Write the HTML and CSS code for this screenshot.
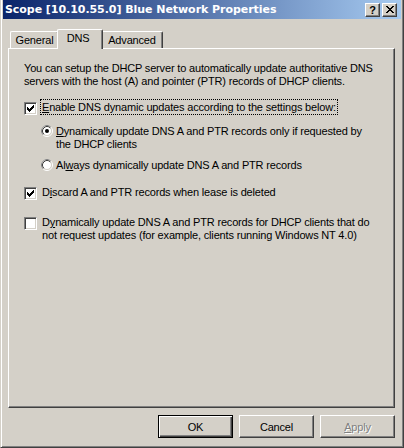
FILE: index.html
```html
<!DOCTYPE html>
<html>
<head>
<meta charset="utf-8">
<link rel="stylesheet" href="styles.css">
</head>
<body>
<div class="window">
  <div class="titlebar">
    <span class="title">Scope [10.10.55.0] Blue Network Properties</span>
    <span class="capbtn help">?</span>
    <span class="capbtn close"><svg width="8" height="7" viewBox="0 0 8 7" shape-rendering="crispEdges"><g fill="#000"><rect x="0" y="0" width="2" height="1"/><rect x="6" y="0" width="2" height="1"/><rect x="1" y="1" width="2" height="1"/><rect x="5" y="1" width="2" height="1"/><rect x="2" y="2" width="4" height="1"/><rect x="3" y="3" width="2" height="1"/><rect x="2" y="4" width="4" height="1"/><rect x="1" y="5" width="2" height="1"/><rect x="5" y="5" width="2" height="1"/><rect x="0" y="6" width="2" height="1"/><rect x="6" y="6" width="2" height="1"/></g></svg></span>
  </div>
  <div class="body">
    <div class="tabs">
      <div class="tab tab-general">General</div>
      <div class="tab tab-dns selected">DNS</div>
      <div class="tab tab-adv">Advanced</div>
    </div>
    <div class="panel">
      <p class="intro">You can setup the DHCP server to automatically update authoritative DNS<br>servers with the host (A) and pointer (PTR) records of DHCP clients.</p>

      <div class="row row-focus r-cb1">
        <span class="check checked"><svg width="11" height="11" viewBox="0 0 11 11" shape-rendering="crispEdges"><g fill="#000" transform="translate(2 2)"><rect x="6" y="0" width="1" height="1"/><rect x="5" y="1" width="2" height="1"/><rect x="0" y="2" width="1" height="1"/><rect x="4" y="2" width="3" height="1"/><rect x="0" y="3" width="2" height="1"/><rect x="3" y="3" width="3" height="1"/><rect x="0" y="4" width="5" height="1"/><rect x="1" y="5" width="3" height="1"/><rect x="2" y="6" width="1" height="1"/></g></svg></span>
        <span class="label focus"><u>E</u>nable DNS dynamic updates according to the settings below:</span>
      </div>

      <div class="row radio-row r-rad1">
        <span class="radio"><svg width="12" height="12" viewBox="0 0 12 12"><circle cx="6" cy="6" r="5.5" fill="none" stroke="#fff"/><path d="M2.11 9.89 A5.5 5.5 0 0 1 9.89 2.11" fill="none" stroke="#808080"/><circle cx="6" cy="6" r="4.5" fill="#fff" stroke="#d4d0c8"/><path d="M2.82 9.18 A4.5 4.5 0 0 1 9.18 2.82" fill="none" stroke="#404040"/><circle cx="6" cy="6" r="2" fill="#000"/></svg></span>
        <span class="label"><u>D</u>ynamically update DNS A and PTR records only if requested by<br>the DHCP clients</span>
      </div>

      <div class="row radio-row r-rad2">
        <span class="radio"><svg width="12" height="12" viewBox="0 0 12 12"><circle cx="6" cy="6" r="5.5" fill="none" stroke="#fff"/><path d="M2.11 9.89 A5.5 5.5 0 0 1 9.89 2.11" fill="none" stroke="#808080"/><circle cx="6" cy="6" r="4.5" fill="#fff" stroke="#d4d0c8"/><path d="M2.82 9.18 A4.5 4.5 0 0 1 9.18 2.82" fill="none" stroke="#404040"/></svg></span>
        <span class="label">Al<u>w</u>ays dynamically update DNS A and PTR records</span>
      </div>

      <div class="row r-cb2">
        <span class="check checked"><svg width="11" height="11" viewBox="0 0 11 11" shape-rendering="crispEdges"><g fill="#000" transform="translate(2 2)"><rect x="6" y="0" width="1" height="1"/><rect x="5" y="1" width="2" height="1"/><rect x="0" y="2" width="1" height="1"/><rect x="4" y="2" width="3" height="1"/><rect x="0" y="3" width="2" height="1"/><rect x="3" y="3" width="3" height="1"/><rect x="0" y="4" width="5" height="1"/><rect x="1" y="5" width="3" height="1"/><rect x="2" y="6" width="1" height="1"/></g></svg></span>
        <span class="label">D<u>i</u>scard A and PTR records when lease is deleted</span>
      </div>

      <div class="row r-cb3">
        <span class="check"></span>
        <span class="label">D<u>y</u>namically update DNS A and PTR records for DHCP clients that do<br>not request updates (for example, clients running Windows NT 4.0)</span>
      </div>
    </div>
    <div class="buttons">
      <button class="btn default">OK</button>
      <button class="btn">Cancel</button>
      <button class="btn disabled"><u>A</u>pply</button>
    </div>
  </div>
</div>
</body>
</html>
```
FILE: styles.css
```css
html, body {
  margin: 0;
  padding: 0;
}
body {
  width: 404px;
  height: 448px;
  overflow: hidden;
  background: #d4d0c8;
  font-family: "Liberation Sans", Arial, sans-serif;
  font-size: 11px;
  color: #000;
}
.window {
  width: 404px;
  height: 448px;
  box-sizing: border-box;
  border-left: 1px solid #d4d0c8;
  border-right: 1px solid #404040;
  border-bottom: 1px solid #404040;
  box-shadow: inset 1px 0 #fff, inset -1px -1px #808080;
  padding: 0 2px 2px 2px;
  display: flex;
  flex-direction: column;
}
.titlebar {
  height: 19px;
  display: flex;
  align-items: center;
  background: linear-gradient(to right, #0a246a, #a6caf0);
  color: #fff;
  font-family: "DejaVu Sans", sans-serif;
  font-weight: bold;
  font-size: 11px;
  padding-left: 2px;
  padding-right: 4px;
  white-space: nowrap;
}
.title {
  flex: 1;
  letter-spacing: -0.05px;
}
.capbtn {
  width: 15px;
  height: 14px;
  box-sizing: border-box;
  background: #d4d0c8;
  border: 1px solid;
  border-color: #fff #404040 #404040 #fff;
  box-shadow: inset -1px -1px #808080;
  display: flex;
  align-items: center;
  justify-content: center;
  color: #000;
}
.capbtn.help {
  margin-right: 2px;
  font-family: "Liberation Sans", Arial, sans-serif;
  font-size: 11px;
  font-weight: bold;
  line-height: 12px;
}
.capbtn svg {
  display: block;
}
.body {
  flex: 1;
  display: flex;
  flex-direction: column;
  padding: 10px 6px 0 5px;
}
.tabs {
  height: 19px;
  display: flex;
  align-items: flex-end;
  padding-left: 2px;
}
.tab {
  box-sizing: border-box;
  height: 17px;
  background: #d4d0c8;
  border-top: 1px solid #fff;
  border-left: 1px solid #fff;
  border-right: 1px solid #404040;
  box-shadow: inset -1px 0 #808080;
  border-radius: 2px 2px 0 0;
  text-align: center;
  line-height: 15px;
  padding-top: 1px;
  white-space: nowrap;
  letter-spacing: -0.17px;
}
.tab-general {
  width: 49px;
}
.tab-dns {
  width: 46px;
}
.tab-adv {
  width: 62px;
}
.tab.selected {
  height: 20px;
  margin: 0 -2px -1px -2px;
  position: relative;
  z-index: 1;
  padding-top: 0;
  line-height: 17px;
  padding-right: 4px;
}
.panel {
  height: 360px;
  box-sizing: border-box;
  border-top: 1px solid #fff;
  border-left: 1px solid #fff;
  border-right: 1px solid #404040;
  border-bottom: 1px solid #404040;
  box-shadow: inset -1px -1px #808080;
  padding: 13px 0 0 15px;
  display: flex;
  flex-direction: column;
  letter-spacing: -0.17px;
  white-space: nowrap;
}
.intro {
  margin: 0;
  line-height: 13px;
}
.row {
  display: flex;
  align-items: flex-start;
}
.label {
  line-height: 13px;
  border: 1px dotted transparent;
  padding: 0 1px;
}
.label.focus {
  border-color: #000;
  padding-top: 1px;
}
.check {
  width: 13px;
  height: 13px;
  box-sizing: border-box;
  flex: none;
  background: #fff;
  border: 1px solid;
  border-color: #808080 #fff #fff #808080;
  box-shadow: inset 1px 1px #404040, inset -1px -1px #d4d0c8;
  margin-top: 2px;
  margin-right: 3px;
}
.check svg {
  display: block;
}
.row-focus .check {
  margin-top: 3px;
}
.radio {
  width: 12px;
  height: 12px;
  flex: none;
  margin-top: 1px;
  margin-right: 1px;
}
.radio svg {
  display: block;
}
.radio-row {
  margin-left: 17px;
}
.r-cb1 {
  margin-top: 11px;
}
.r-rad1 {
  margin-top: 9px;
}
.r-rad2 {
  margin-top: 6px;
}
.r-cb2 {
  margin-top: 12px;
}
.r-cb3 {
  margin-top: 15px;
}
.buttons {
  display: flex;
  justify-content: flex-end;
  gap: 6px;
  margin-top: 7px;
}
.btn {
  width: 75px;
  height: 23px;
  box-sizing: border-box;
  margin: 0;
  padding: 0;
  font-family: "Liberation Sans", Arial, sans-serif;
  font-size: 11px;
  letter-spacing: -0.17px;
  color: #000;
  background: #d4d0c8;
  border: 1px solid;
  border-color: #fff #404040 #404040 #fff;
  box-shadow: inset -1px -1px #808080;
  border-radius: 0;
}
.btn.default {
  border: 1px solid #000;
  box-shadow: inset 1px 1px #fff, inset -1px -1px #404040, inset -2px -2px #808080;
}
.btn.disabled {
  color: #808080;
  text-shadow: 1px 1px #fff;
}
```
